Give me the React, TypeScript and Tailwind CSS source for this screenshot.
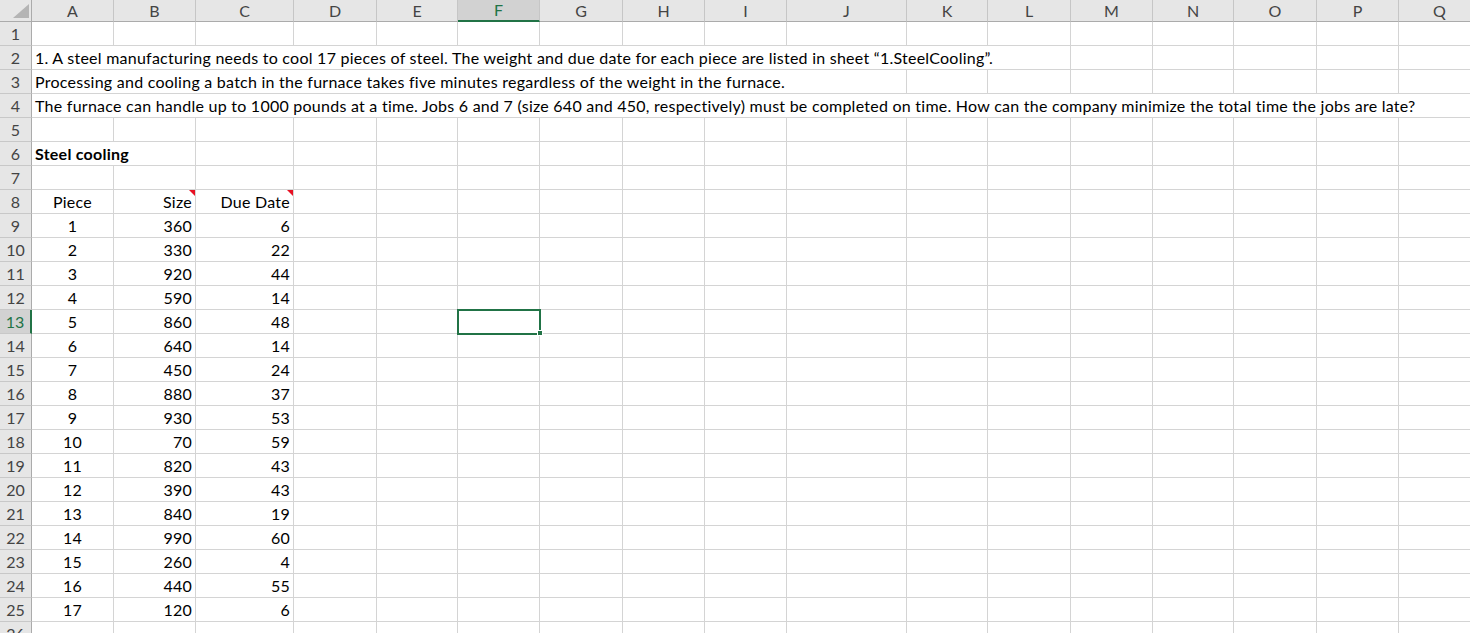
import React from "react";

const COLS = ["A", "B", "C", "D", "E", "F", "G", "H", "I", "J", "K", "L", "M", "N", "O", "P", "Q"];
const WIDTHS = [
  "w-[82px]", "w-[82px]", "w-[98px]", "w-[83px]", "w-[81px]", "w-[82px]", "w-[83px]", "w-[82px]", "w-[82px]",
  "w-[120px]", "w-[81px]", "w-[83px]", "w-[82px]", "w-[81px]", "w-[83px]", "w-[82px]", "w-[82px]",
];

const sizes = [360, 330, 920, 590, 860, 640, 450, 880, 930, 70, 820, 390, 840, 990, 260, 440, 120];
const dues = [6, 22, 44, 14, 48, 14, 24, 37, 53, 59, 43, 43, 19, 60, 4, 55, 6];

// long text rows spill over the empty cells to the right
const spill: Record<number, { text: string; span: number; w: string; bold?: boolean }> = {
  2: {
    text: "1. A steel manufacturing needs to cool 17 pieces of steel. The weight and due date for each piece are listed in sheet \u201c1.SteelCooling\u201d.",
    span: 12,
    w: "w-[1039px]",
  },
  3: {
    text: "Processing and cooling a batch in the furnace takes five minutes regardless of the weight in the furnace.",
    span: 10,
    w: "w-[875px]",
  },
  4: {
    text: "The furnace can handle up to 1000 pounds at a time. Jobs 6 and 7 (size 640 and 450, respectively) must be completed on time. How can the company minimize the total time the jobs are late?",
    span: 17,
    w: "w-[1449px]",
  },
  6: { text: "Steel cooling", span: 2, w: "w-[164px]", bold: true },
};

function CommentMark() {
  return (
    <svg className="absolute right-0 top-0" width="6" height="6" viewBox="0 0 6 6">
      <polygon points="0,0 6,0 6,6" fill="#e81123" />
    </svg>
  );
}

function cellContent(row: number, col: number) {
  if (row === 8) {
    if (col === 0) return { text: "Piece", align: "justify-center" };
    if (col === 1) return { text: "Size", align: "justify-end", mark: true };
    if (col === 2) return { text: "Due Date", align: "justify-end", mark: true };
  }
  if (row >= 9 && row <= 25) {
    const i = row - 9;
    if (col === 0) return { text: String(i + 1), align: "justify-center" };
    if (col === 1) return { text: String(sizes[i]), align: "justify-end" };
    if (col === 2) return { text: String(dues[i]), align: "justify-end" };
  }
  return null;
}

function SheetRow({ row }: { row: number }) {
  const active = row === 13;
  const s = spill[row];
  const start = s ? s.span : 0;

  return (
    <div className="flex h-[24px] shrink-0">
      <div
        className={`flex w-[32px] shrink-0 items-center justify-center border-b border-[#c8c8c8] text-[16px] ${
          active ? "border-r-2 border-r-[#217346] bg-[#d2d2d2] text-[#217346]" : "border-r border-r-[#ababab] bg-[#e6e6e6] text-[#444]"
        }`}
      >
        {row}
      </div>
      {s && (
        <div className={`flex shrink-0 items-end whitespace-nowrap border-b border-r border-[#d4d4d4] pb-[2px] pl-[3px] leading-[19px] tracking-[0.25px] ${s.w} ${s.bold ? "font-bold" : ""}`}>
          {s.text}
        </div>
      )}
      {COLS.slice(start).map((c, k) => {
        const col = start + k;
        const content = cellContent(row, col);
        const selected = row === 13 && col === 5;
        return (
          <div
            key={c}
            className={`relative flex shrink-0 items-end border-b border-r border-[#d4d4d4] px-[3px] pb-[2px] leading-[19px] tracking-[0.25px] ${WIDTHS[col]} ${
              content ? content.align : ""
            }`}
          >
            {content?.text}
            {content?.mark && <CommentMark />}
            {selected && (
              <>
                <div className="absolute -left-[1px] -top-[1px] z-10 h-[26px] w-[84px] border-2 border-[#217346]" />
                <div className="absolute -bottom-[3px] -right-[4px] z-20 h-[6px] w-[6px] border border-white bg-[#217346]" />
              </>
            )}
          </div>
        );
      })}
    </div>
  );
}

export default function App() {
  const rows = Array.from({ length: 26 }, (_, i) => i + 1);

  return (
    <div className="h-[633px] w-[1470px] overflow-hidden bg-white font-[Lato,sans-serif] text-[16px] text-black">
      {/* column headers */}
      <div className="flex h-[22px] shrink-0">
        <div className="relative w-[32px] shrink-0 border-b border-r border-[#ababab] bg-[#e6e6e6]">
          <svg className="absolute bottom-[3px] right-[2px]" width="16" height="14" viewBox="0 0 16 14">
            <polygon points="16,0 16,14 0,14" fill="#b4b4b4" />
          </svg>
        </div>
        {COLS.map((c, i) => (
          <div
            key={c}
            className={`flex shrink-0 items-center justify-center border-r border-[#c6c6c6] text-[16px] ${WIDTHS[i]} ${
              c === "F" ? "border-b-2 border-b-[#217346] bg-[#d2d2d2] text-[#217346]" : "border-b border-b-[#ababab] bg-[#e6e6e6] text-[#444]"
            }`}
          >
            {c}
          </div>
        ))}
      </div>

      {rows.map((r) => (
        <SheetRow key={r} row={r} />
      ))}
    </div>
  );
}
